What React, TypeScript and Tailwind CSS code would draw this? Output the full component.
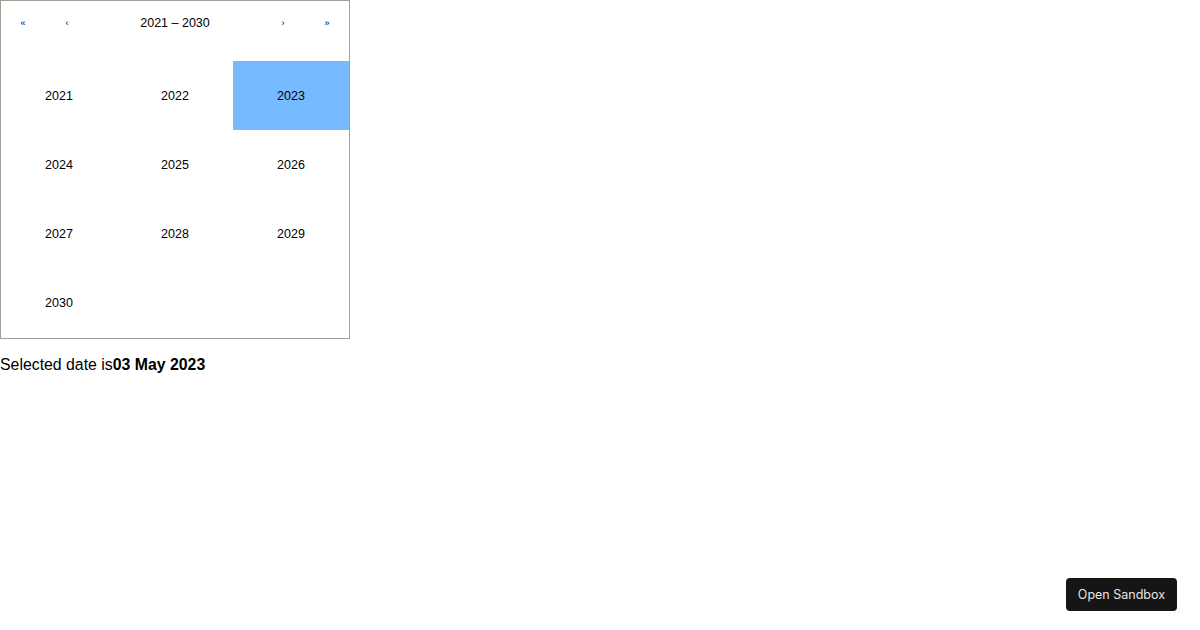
import React from "react"

const years = [2021, 2022, 2023, 2024, 2025, 2026, 2027, 2028, 2029, 2030]

export default function App() {
  return (
    <div className="min-h-[630px] bg-white font-['Liberation_Sans',Arial,sans-serif] text-black">
      <div className="w-[350px] border border-[#a0a096] bg-white leading-[1.125em]">
        {/* Navigation */}
        <div className="flex h-[44px] mb-4 text-[12.5px]">
          <button className="min-w-[44px] bg-transparent text-[9px]">«</button>
          <button className="min-w-[44px] bg-transparent text-[9px]">‹</button>
          <button className="flex-grow bg-transparent">2021 – 2030</button>
          <button className="min-w-[44px] bg-transparent text-[9px]">›</button>
          <button className="min-w-[44px] bg-transparent text-[9px]">»</button>
        </div>
        {/* Decade view */}
        <div className="grid grid-cols-3 auto-rows-[69.25px] text-[12.5px]">
          {years.map((y) => (
            <button
              key={y}
              className={y === 2023 ? "bg-[#76baff] text-center" : "bg-transparent text-center"}
            >
              {y}
            </button>
          ))}
        </div>
      </div>
      <p className="mt-[17px] text-[15.85px] leading-[normal]">
        Selected date is<b>03 May 2023</b>
      </p>
      <button className="fixed right-[23px] bottom-[19px] h-[33px] px-[12px] pt-[2px] rounded bg-[#151515] text-[12.5px] text-[#e6e6e6] font-['Inter',sans-serif]">
        Open Sandbox
      </button>
    </div>
  )
}
